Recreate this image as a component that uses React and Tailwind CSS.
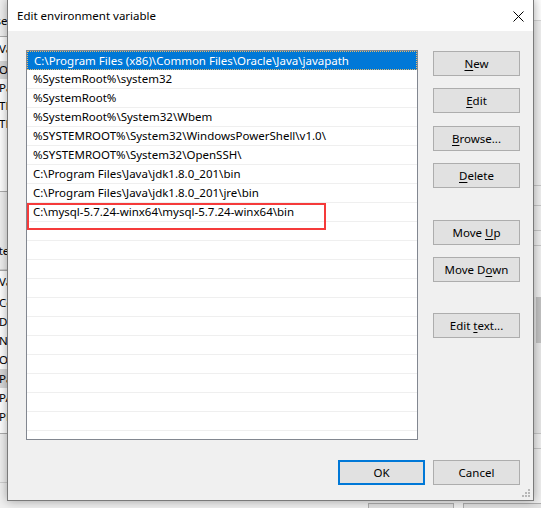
import React from 'react';

const PATHS = [
  'C:\\Program Files (x86)\\Common Files\\Oracle\\Java\\javapath',
  '%SystemRoot%\\system32',
  '%SystemRoot%',
  '%SystemRoot%\\System32\\Wbem',
  '%SYSTEMROOT%\\System32\\WindowsPowerShell\\v1.0\\',
  '%SYSTEMROOT%\\System32\\OpenSSH\\',
  'C:\\Program Files\\Java\\jdk1.8.0_201\\bin',
  'C:\\Program Files\\Java\\jdk1.8.0_201\\jre\\bin',
  'C:\\mysql-5.7.24-winx64\\mysql-5.7.24-winx64\\bin',
];

const ROWS = [...PATHS, ...Array(12).fill('')];

const USER_VARS = ['OneDrive', 'Path', 'TEMP', 'TMP'];
const SYSTEM_VARS = ['ComSpec', 'DriverData', 'NUMBER_OF_PROCESSORS', 'OS', 'Path', 'PATHEXT', 'PROCESSOR_ARCHITECTURE'];

function Btn({ children, className = '', focused = false }) {
  return (
    <button
      type="button"
      className={`flex h-[25px] w-[87px] shrink-0 items-center justify-center bg-[#e1e1e1] text-[11.5px] leading-none text-black ${
        focused ? 'border-2 border-[#0078d7]' : 'border border-[#adadad]'
      } ${className}`}
    >
      <span className="whitespace-pre">{children}</span>
    </button>
  );
}

function Key({ children }) {
  return <span className="underline underline-offset-[2px]">{children}</span>;
}

// Window sitting behind the dialog; only its edges peek out
function ParentWindow() {
  return (
    <div className="absolute inset-0 bg-[#f0f0f0]">
      <div className="absolute left-0 top-0 h-full w-[7px] overflow-hidden text-[11.5px] text-black">
        <div className="h-[36px] pt-[12px]">
          <span className="ml-[-13px] whitespace-nowrap">User variables</span>
        </div>
        <div className="h-[156px] border-y border-[#adadad] bg-white">
          <div className="-ml-[1px] h-[24px] whitespace-nowrap pt-[5px] leading-[14px]">Variable</div>
          {USER_VARS.map((v, i) => (
            <div
              key={v}
              className={`-ml-[1px] h-[18px] whitespace-nowrap leading-[18px] ${i === 0 ? 'bg-[#d9d9d9]' : ''}`}
            >
              {v}
            </div>
          ))}
        </div>
        <div className="h-[78px] border-b border-[#d0d0d0] pt-[50px]">
          <span className="ml-[-19px] whitespace-nowrap">System variables</span>
        </div>
        <div className="h-[164px] border-y border-[#adadad] bg-white">
          <div className="-ml-[1px] h-[22px] whitespace-nowrap pt-[4px] leading-[14px]">Variable</div>
          {SYSTEM_VARS.map((v, i) => (
            <div
              key={i}
              className={`-ml-[1px] h-[19px] whitespace-nowrap leading-[19px] ${i === 4 ? 'bg-[#d9d9d9]' : ''}`}
            >
              {v}
            </div>
          ))}
        </div>
        <div className="mt-[48px] border-t border-[#d0d0d0]" />
      </div>

      <div className="absolute right-0 top-0 flex h-full w-[8px] flex-col bg-[#f0f0f0]">
        <div className="h-[20px] bg-white" />
        <div className="h-[165px] border-t border-[#d6d6d6]" />
        <div className="h-[20px] border-t border-[#c8c8c8]" />
        <div className="h-[25px] border-t border-[#c8c8c8]" />
        <div className="h-[15px] border-t border-[#c8c8c8]" />
        <div className="h-[52px] border-t border-[#c8c8c8]" />
        <div className="flex h-[46px] bg-[#e8e8e8]">
          <div className="ml-[3px] flex-1 bg-[#c2c2c2]" />
        </div>
        <div className="h-[90px] bg-[#e8e8e8]" />
        <div className="h-[15px] border-t border-[#c8c8c8]" />
        <div className="flex-1 border-t border-[#c8c8c8]" />
      </div>

      <div className="absolute bottom-[-20px] left-[368px] h-[25px] w-[86px] border border-[#adadad] bg-[#e1e1e1]" />
      <div className="absolute bottom-[-20px] left-[463px] h-[25px] w-[86px] border border-[#adadad] bg-[#e1e1e1]" />
    </div>
  );
}

function Grip() {
  const dots = [
    [7, 1],
    [4, 4],
    [7, 4],
    [1, 7],
    [4, 7],
    [7, 7],
  ];
  return (
    <svg className="absolute bottom-[2px] right-[2px]" width="10" height="10" viewBox="0 0 10 10">
      {dots.map(([x, y]) => (
        <rect key={`${x}-${y}`} x={x} y={y} width="2" height="2" fill="#b8b8b8" />
      ))}
    </svg>
  );
}

export default function App() {
  return (
    <div className="relative h-[508px] w-[541px] overflow-hidden font-['Noto_Sans',sans-serif]">
      <ParentWindow />

      <div className="absolute left-[7px] top-[-1px] flex h-[502px] w-[527px] flex-col border border-[#7a7a7a] bg-[#f0f0f0] shadow-[0_0_10px_rgba(0,0,0,0.35)]">
        <div className="flex h-[31px] shrink-0 items-center justify-between bg-white pl-[9px] pr-[9px]">
          <span className="text-[11.5px] text-black">Edit environment variable</span>
          <svg width="11" height="11" viewBox="0 0 11 11" className="mt-[1px]">
            <path d="M0.5 0.5L10.5 10.5M10.5 0.5L0.5 10.5" stroke="#000" strokeWidth="1" />
          </svg>
        </div>

        <div className="flex flex-1 flex-col pl-[18px] pr-[13px] pt-[19px]">
          <div className="flex gap-[15px]">
            <div className="relative h-[390px] w-[392px] overflow-hidden border border-[#828790] bg-white">
              {ROWS.map((p, i) => (
                <div
                  key={i}
                  className={`h-[19px] whitespace-nowrap pl-[6px] text-[11.5px] leading-[18px] ${
                    i === 0
                      ? 'border border-dotted border-[#e7b96a] bg-[#0078d7] pl-[5px] leading-[17px] text-white'
                      : 'border-b border-[#efefef] text-black'
                  }`}
                >
                  {p}
                </div>
              ))}
              <div className="absolute left-0 top-[152px] h-[27px] w-[299px] border-2 border-[#f53a3a]" />
            </div>

            <div className="flex flex-col pt-[1px]">
              <Btn>
                <Key>N</Key>ew
              </Btn>
              <Btn className="mt-[12px]">
                <Key>E</Key>dit
              </Btn>
              <Btn className="mt-[13px]">
                <Key>B</Key>rowse...
              </Btn>
              <Btn className="mt-[12px]">
                <Key>D</Key>elete
              </Btn>
              <Btn className="mt-[32px]">
                {'Move '}
                <Key>U</Key>p
              </Btn>
              <Btn className="mt-[12px]">
                Move D<Key>o</Key>wn
              </Btn>
              <Btn className="mt-[31px]">
                {'Edit '}
                <Key>t</Key>ext...
              </Btn>
            </div>
          </div>

          <div className="mt-[20px] flex justify-end gap-[8px]">
            <Btn focused>OK</Btn>
            <Btn>Cancel</Btn>
          </div>
        </div>
        <Grip />
      </div>
    </div>
  );
}
